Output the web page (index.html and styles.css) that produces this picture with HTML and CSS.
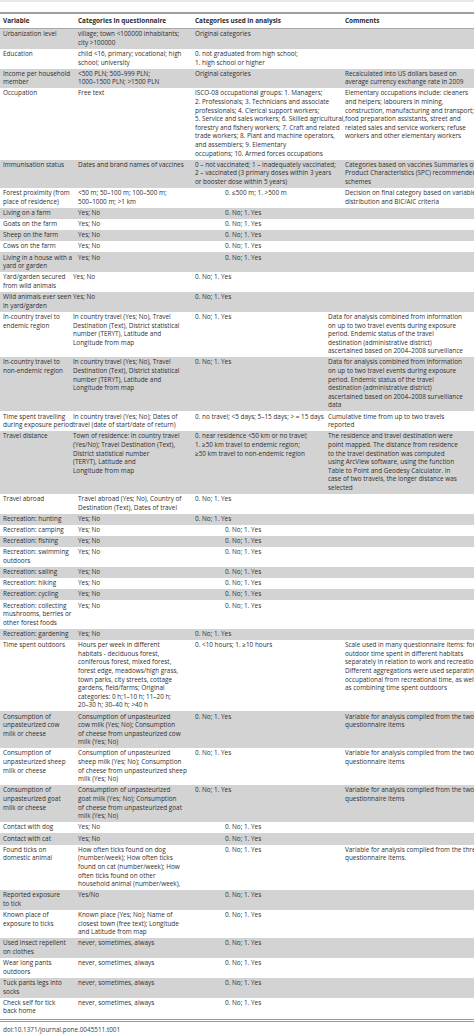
FILE: index.html
```html
<!DOCTYPE html>
<html lang="en">
<head>
<meta charset="utf-8">
<title>Table</title>
<link rel="stylesheet" href="styles.css">
</head>
<body>
<div class="page">
  <div class="band"></div>
  <div class="table">
    <div class="row a head"><div>Variable</div><div>Categories in questionnaire</div><div>Categories used in analysis</div><div>Comments</div></div>

    <div class="row a g"><div>Urbanization level</div><div>village; town &lt;100000 inhabitants;<br>city &gt;100000</div><div>Original categories</div><div></div></div>
    <div class="row a"><div>Education</div><div>child &lt;16, primary; vocational; high<br>school; university</div><div>0. not graduated from high school;<br>1. high school or higher</div><div></div></div>
    <div class="row a g"><div>Income per household<br>member</div><div>&lt;500 PLN; 500–999 PLN;<br>1000–1500 PLN; &gt;1500 PLN</div><div>Original categories</div><div>Recalculated into US dollars based on<br>average currency exchange rate in 2009</div></div>
    <div class="row a"><div>Occupation</div><div>Free text</div><div>ISCO-08 occupational groups: 1. Managers;<br>2. Professionals; 3. Technicians and associate<br>professionals; 4. Clerical support workers;<br>5. Service and sales workers; 6. Skilled agricultural,<br>forestry and fishery workers; 7. Craft and related<br>trade workers; 8. Plant and machine operators,<br>and assemblers; 9. Elementary<br>occupations; 10. Armed forces occupations</div><div>Elementary occupations include: cleaners<br>and helpers; labourers in mining,<br>construction, manufacturing and transport;<br>food preparation assistants, street and<br>related sales and service workers; refuse<br>workers and other elementary workers</div></div>
    <div class="row a g"><div>Immunisation status</div><div>Dates and brand names of vaccines</div><div>0 – not vaccinated; 1 – inadequately vaccinated;<br>2 – vaccinated (3 primary doses within 3 years<br>or booster dose within 5 years)</div><div>Categories based on vaccines Summaries of<br>Product Characteristics (SPC) recommended<br>schemes</div></div>

    <div class="row b"><div>Forest proximity (from<br>place of residence)</div><div>&lt;50 m; 50–100 m; 100–500 m;<br>500–1000 m; &gt;1 km</div><div>0. ≤500 m; 1. &gt;500 m</div><div>Decision on final category based on variable<br>distribution and BIC/AIC criteria</div></div>
    <div class="row b g"><div>Living on a farm</div><div>Yes; No</div><div>0. No; 1. Yes</div><div></div></div>
    <div class="row b"><div>Goats on the farm</div><div>Yes; No</div><div>0. No; 1. Yes</div><div></div></div>
    <div class="row b g"><div>Sheep on the farm</div><div>Yes; No</div><div>0. No; 1. Yes</div><div></div></div>
    <div class="row b"><div>Cows on the farm</div><div>Yes; No</div><div>0. No; 1. Yes</div><div></div></div>
    <div class="row b g"><div>Living in a house with a<br>yard or garden</div><div>Yes; No</div><div>0. No; 1. Yes</div><div></div></div>

    <div class="row c"><div>Yard/garden secured<br>from wild animals</div><div>Yes; No</div><div>0. No; 1. Yes</div><div></div></div>
    <div class="row c g"><div>Wild animals ever seen<br>in yard/garden</div><div>Yes; No</div><div>0. No; 1. Yes</div><div></div></div>
    <div class="row c"><div>In-country travel to<br>endemic region</div><div>In country travel (Yes; No), Travel<br>Destination (Text), District statistical<br>number (TERYT), Latitude and<br>Longitude from map</div><div>0. No; 1. Yes</div><div>Data for analysis combined from information<br>on up to two travel events during exposure<br>period. Endemic status of the travel<br>destination (administrative district)<br>ascertained based on 2004–2008 surveillance</div></div>
    <div class="row c g"><div>In-country travel to<br>non-endemic region</div><div>In country travel (Yes; No), Travel<br>Destination (Text), District statistical<br>number (TERYT), Latitude and<br>Longitude from map</div><div>0. No; 1. Yes</div><div>Data for analysis combined from information<br>on up to two travel events during exposure<br>period. Endemic status of the travel<br>destination (administrative district)<br>ascertained based on 2004–2008 surveillance<br>data</div></div>
    <div class="row c"><div>Time spent travelling<br>during exposure period</div><div>In country travel (Yes; No); Dates of<br>travel (date of start/date of return)</div><div>0. no travel; &lt;5 days; 5–15 days; &gt; = 15 days</div><div>Cumulative time from up to two travels<br>reported</div></div>
    <div class="row c g"><div>Travel distance</div><div>Town of residence: In country travel<br>(Yes/No); Travel Destination (Text),<br>District statistical number<br>(TERYT), Latitude and<br>Longitude from map</div><div>0. near residence &lt;50 km or no travel;<br>1. ≥50 km travel to endemic region;<br>≥50 km travel to non-endemic region</div><div>The residence and travel destination were<br>point mapped. The distance from residence<br>to the travel destination was computed<br>using ArcView software, using the function<br>Table to Point and Geodesy Calculator. In<br>case of two travels, the longer distance was<br>selected</div></div>

    <div class="row a"><div>Travel abroad</div><div>Travel abroad (Yes; No), Country of<br>Destination (Text), Dates of travel</div><div>0. No; 1. Yes</div><div></div></div>
    <div class="row a g"><div>Recreation: hunting</div><div>Yes; No</div><div>0. No; 1. Yes</div><div></div></div>

    <div class="row b"><div>Recreation: camping</div><div>Yes; No</div><div>0. No; 1. Yes</div><div></div></div>
    <div class="row b g"><div>Recreation: fishing</div><div>Yes; No</div><div>0. No; 1. Yes</div><div></div></div>
    <div class="row b"><div>Recreation: swimming<br>outdoors</div><div>Yes; No</div><div>0. No; 1. Yes</div><div></div></div>
    <div class="row b g"><div>Recreation: sailing</div><div>Yes; No</div><div>0. No; 1. Yes</div><div></div></div>
    <div class="row b"><div>Recreation: hiking</div><div>Yes; No</div><div>0. No; 1. Yes</div><div></div></div>
    <div class="row b g"><div>Recreation: cycling</div><div>Yes; No</div><div>0. No; 1. Yes</div><div></div></div>
    <div class="row b"><div>Recreation: collecting<br>mushrooms, berries or<br>other forest foods</div><div>Yes; No</div><div>0. No; 1. Yes</div><div></div></div>

    <div class="row a g"><div>Recreation: gardening</div><div>Yes; No</div><div>0. No; 1. Yes</div><div></div></div>
    <div class="row a"><div>Time spent outdoors</div><div>Hours per week in different<br>habitats - deciduous forest,<br>coniferous forest, mixed forest,<br>forest edge, meadows/high grass,<br>town parks, city streets, cottage<br>gardens, field/farms; Original<br>categories: 0 h;1–10 h; 11–20 h;<br>20–30 h; 30–40 h; &gt;40 h</div><div>0. &lt;10 hours; 1. ≥10 hours</div><div>Scale used in many questionnaire items: for<br>outdoor time spent in different habitats<br>separately in relation to work and recreation.<br>Different aggregations were used separating<br>occupational from recreational time, as well<br>as combining time spent outdoors</div></div>
    <div class="row a g"><div>Consumption of<br>unpasteurized cow<br>milk or cheese</div><div>Consumption of unpasteurized<br>cow milk (Yes; No); Consumption<br>of cheese from unpasteurized cow<br>milk (Yes; No)</div><div>0. No; 1. Yes</div><div>Variable for analysis compiled from the two<br>questionnaire items</div></div>
    <div class="row a"><div>Consumption of<br>unpasteurized sheep<br>milk or cheese</div><div>Consumption of unpasteurized<br>sheep milk (Yes; No); Consumption<br>of cheese from unpasteurized sheep<br>milk (Yes; No)</div><div>0. No; 1. Yes</div><div>Variable for analysis compiled from the two<br>questionnaire items</div></div>
    <div class="row a g"><div>Consumption of<br>unpasteurized goat<br>milk or cheese</div><div>Consumption of unpasteurized<br>goat milk (Yes; No); Consumption<br>of cheese from unpasteurized goat<br>milk (Yes; No)</div><div>0. No; 1. Yes</div><div>Variable for analysis compiled from the two<br>questionnaire items</div></div>

    <div class="row b"><div>Contact with dog</div><div>Yes; No</div><div>0. No; 1. Yes</div><div></div></div>
    <div class="row b g"><div>Contact with cat</div><div>Yes; No</div><div>0. No; 1. Yes</div><div></div></div>
    <div class="row b"><div>Found ticks on<br>domestic animal</div><div>How often ticks found on dog<br>(number/week); How often ticks<br>found on cat (number/week); How<br>often ticks found on other<br>household animal (number/week),</div><div>0. No; 1. Yes</div><div>Variable for analysis compiled from the three<br>questionnaire items.</div></div>
    <div class="row b g"><div>Reported exposure<br>to tick</div><div>Yes/No</div><div>0. No; 1. Yes</div><div></div></div>
    <div class="row b"><div>Known place of<br>exposure to ticks</div><div>Known place (Yes; No); Name of<br>closest town (free text); Longitude<br>and Latitude from map</div><div>0. No; 1. Yes</div><div></div></div>
    <div class="row b g"><div>Used insect repellent<br>on clothes</div><div>never, sometimes, always</div><div>0. No; 1. Yes</div><div></div></div>
    <div class="row b"><div>Wear long pants<br>outdoors</div><div>never, sometimes, always</div><div>0. No; 1. Yes</div><div></div></div>
    <div class="row b g"><div>Tuck pants legs into<br>socks</div><div>never, sometimes, always</div><div>0. No; 1. Yes</div><div></div></div>
    <div class="row b"><div>Check self for tick<br>back home</div><div>never, sometimes, always</div><div>0. No; 1. Yes</div><div></div></div>
  </div>
  <div class="doi">doi:10.1371/journal.pone.0045511.t001</div>
</div>
</body>
</html>
```
FILE: styles.css
```css
html, body {
  margin: 0;
  padding: 0;
  background: #ffffff;
}
body {
  font-family: "Open Sans", "Liberation Sans", sans-serif;
  font-size: 6.4px;
  color: #2f2f2f;
}
.page {
  width: 474px;
  overflow: hidden;
}
.band {
  height: 2px;
  background: #e8e8e8;
  margin-bottom: 10px;
}
.table {
  border-top: 2px solid #9e9e9e;
  border-bottom: 3px double #9a9a9a;
  padding-bottom: 2px;
}
.row {
  display: grid;
  line-height: 8.6px;
  padding: 1.2px 0 1.4px;
  white-space: nowrap;
  overflow: hidden;
}
.row > div {
  padding-left: 3px;
}
.g {
  background: #d3d3d3;
}
.a {
  grid-template-columns: 75px 117px 150px 1fr;
}
.b {
  grid-template-columns: 75px 147px 120px 1fr;
}
.c {
  grid-template-columns: 70px 122px 133px 1fr;
}
.head {
  font-weight: bold;
  color: #2a2a2a;
  padding: 3px 0 2.4px;
  border-bottom: 1px solid #a8a8a8;
}
.doi {
  padding: 4px 3px 2px;
  line-height: 8px;
  color: #3a3a3a;
}
```
